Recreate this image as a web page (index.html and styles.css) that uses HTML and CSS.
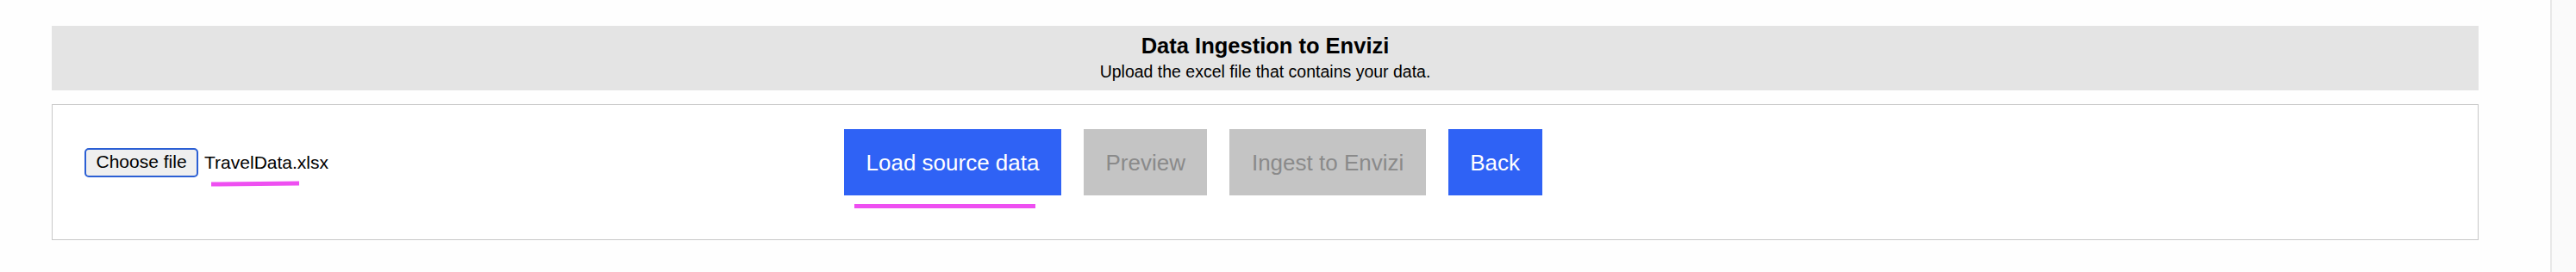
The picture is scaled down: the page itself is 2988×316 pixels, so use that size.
FILE: index.html
```html
<!DOCTYPE html>
<html lang="en">
<head>
<meta charset="utf-8">
<title>Data Ingestion to Envizi</title>
<link rel="stylesheet" href="styles.css">
</head>
<body>
  <div class="main">
    <header class="banner">
      <h1 class="banner-title">Data Ingestion to Envizi</h1>
      <p class="banner-sub">Upload the excel file that contains your data.</p>
    </header>
    <section class="panel">
      <div class="file-col">
        <button class="file-btn" type="button">Choose file</button>
        <span class="file-name mark-file">TravelData.xlsx</span>
      </div>
      <div class="actions">
        <button class="btn btn-primary mark-load" type="button">Load source data</button>
        <button class="btn btn-disabled" type="button" disabled>Preview</button>
        <button class="btn btn-disabled" type="button" disabled>Ingest to Envizi</button>
        <button class="btn btn-primary" type="button">Back</button>
      </div>
    </section>
  </div>
  <div class="scrollbar"></div>
</body>
</html>
```

FILE: styles.css
```css
html, body {
  margin: 0;
  padding: 0;
  background: #fefefe;
}
body {
  display: flex;
  width: 2988px;
  height: 316px;
  overflow: hidden;
  font-family: "Liberation Sans", Arial, Helvetica, sans-serif;
  color: #000;
}
.main {
  flex: 1 1 auto;
  padding: 30px 83px 0 60px;
}
.scrollbar {
  flex: 0 0 28px;
  height: 316px;
  background: #fafafa;
  border-left: 2px solid #e8e8e8;
}
.banner {
  box-sizing: border-box;
  height: 75px;
  padding-top: 8px;
  background: #e4e4e4;
  text-align: center;
}
.banner-title {
  margin: 0;
  font-size: 25.5px;
  line-height: 30px;
  font-weight: 700;
}
.banner-sub {
  margin: 5px 0 0;
  font-size: 19.5px;
  line-height: 21px;
}
.panel {
  margin-top: 16px;
  box-sizing: border-box;
  height: 158px;
  border: 1px solid #c8c8c8;
  padding: 28px 0 51px 37px;
  display: flex;
  align-items: center;
  background: #fff;
}
.file-col {
  flex: 0 0 881px;
  display: flex;
  align-items: center;
  gap: 7px;
}
.file-btn {
  box-sizing: border-box;
  height: 34px;
  padding: 2px 11.5px 4px;
  border: 2px solid #2b5fd4;
  border-radius: 5px;
  background: #efefef;
  font-family: inherit;
  font-size: 21px;
  line-height: 24px;
  color: #000;
}
.file-name {
  font-size: 21px;
  line-height: 24px;
}
.actions {
  display: flex;
  gap: 26px;
}
.btn {
  box-sizing: border-box;
  height: 77px;
  padding: 24px 25.5px 23px;
  border: 0;
  border-radius: 0;
  font-family: inherit;
  font-size: 26px;
  line-height: 30px;
}
.btn-primary {
  background: #2f62f5;
  color: #fff;
}
.btn-disabled {
  background: #c4c4c4;
  color: #8a8a8a;
}
.mark-file, .mark-load {
  position: relative;
}
.mark-file::after {
  content: "";
  position: absolute;
  left: 8px;
  top: 34px;
  width: 102px;
  height: 5px;
  background: #ee4ff1;
  transform: rotate(-0.6deg);
}
.mark-load::after {
  content: "";
  position: absolute;
  left: 12px;
  top: 87px;
  width: 210px;
  height: 5px;
  background: #ee4ff1;
}
```
